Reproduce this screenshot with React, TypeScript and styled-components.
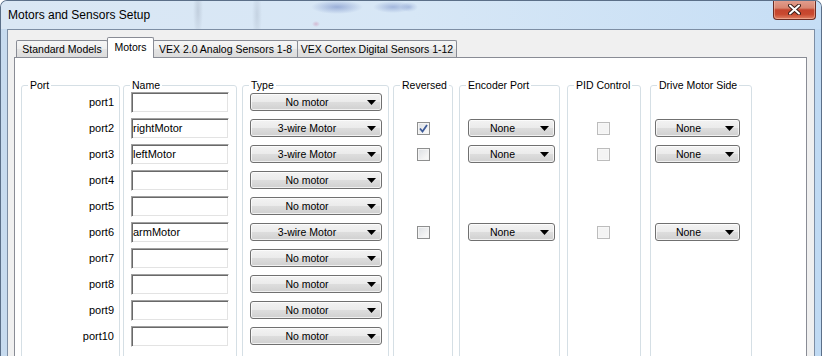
import React from 'react';
import styled, { createGlobalStyle } from 'styled-components';

const GlobalStyle = createGlobalStyle`
  html, body {
    margin: 0;
    padding: 0;
    background: #ffffff;
    overflow: hidden;
  }
  body {
    font-family: "Liberation Sans", Arial, sans-serif;
    font-size: 11px;
    color: #000;
  }
`;

type Port = {
    name: string;
    type: string;
    checked?: boolean;
};

const ports: Port[] = [
    { name: '', type: 'No motor' },
    { name: 'rightMotor', type: '3-wire Motor', checked: true },
    { name: 'leftMotor', type: '3-wire Motor', checked: false },
    { name: '', type: 'No motor' },
    { name: '', type: 'No motor' },
    { name: 'armMotor', type: '3-wire Motor', checked: false },
    { name: '', type: 'No motor' },
    { name: '', type: 'No motor' },
    { name: '', type: 'No motor' },
    { name: '', type: 'No motor' },
];

const hasMotor = (p: Port) => p.type !== 'No motor';

const Arrow = () => (
    <svg width="9" height="5" viewBox="0 0 9 5">
        <polygon points="0,0 9,0 4.5,5" fill="#000" />
    </svg>
);

const Check = () => (
    <svg width="9" height="9" viewBox="0 0 9 9">
        <path d="M1 4.5 L3.5 7.5 L8 1" fill="none" stroke="#3d5a98" strokeWidth="1.8" />
    </svg>
);

const CloseX = () => (
    <svg width="13" height="11" viewBox="0 0 13 11">
        <path d="M2 1.5 L11 9.5 M11 1.5 L2 9.5" stroke="#3b1f1a" strokeWidth="4" strokeLinecap="round" />
        <path d="M2 1.5 L11 9.5 M11 1.5 L2 9.5" stroke="#ffffff" strokeWidth="2" strokeLinecap="round" />
    </svg>
);

const MotorsSetup = () => {
    return (
        <Window>
            <TitleBar>
                <Title>Motors and Sensors Setup</Title>
                <CloseButton>
                    <CloseX />
                </CloseButton>
            </TitleBar>

            <Frame>
                <Client>
                    <TabStrip>
                        <Tab $w={92}>Standard Models</Tab>
                        <Tab $w={47} $active>Motors</Tab>
                        <Tab $w={145}>VEX 2.0 Analog Sensors 1-8</Tab>
                        <Tab $w={160}>VEX Cortex Digital Sensors 1-12</Tab>
                    </TabStrip>

                    <Panel>
                        {/* Port */}
                        <Group $w={99} $ml={0}>
                            <Legend>Port</Legend>
                            <Rows $pl={0} $pr={5}>
                                {ports.map((_, i) => (
                                    <Row key={i} $justify="flex-end">port{i + 1}</Row>
                                ))}
                            </Rows>
                        </Group>

                        {/* Name */}
                        <Group $w={114} $ml={3}>
                            <Legend>Name</Legend>
                            <Rows $pl={7} $pr={0}>
                                {ports.map((p, i) => (
                                    <Row key={i}>
                                        <NameBox readOnly value={p.name} />
                                    </Row>
                                ))}
                            </Rows>
                        </Group>

                        {/* Type */}
                        <Group $w={147} $ml={5}>
                            <Legend>Type</Legend>
                            <Rows $pl={7} $pr={0}>
                                {ports.map((p, i) => (
                                    <Row key={i}>
                                        <Dropdown $w={132}>
                                            <DropLabel>{p.type}</DropLabel>
                                            <Arrow />
                                        </Dropdown>
                                    </Row>
                                ))}
                            </Rows>
                        </Group>

                        {/* Reversed */}
                        <Group $w={60} $ml={4}>
                            <Legend>Reversed</Legend>
                            <Rows $pl={0} $pr={0}>
                                {ports.map((p, i) => (
                                    <Row key={i} $justify="center">
                                        {hasMotor(p) && (
                                            <CheckBox>{p.checked && <Check />}</CheckBox>
                                        )}
                                    </Row>
                                ))}
                            </Rows>
                        </Group>

                        {/* Encoder Port */}
                        <Group $w={101} $ml={6}>
                            <Legend>Encoder Port</Legend>
                            <Rows $pl={8} $pr={0}>
                                {ports.map((p, i) => (
                                    <Row key={i}>
                                        {hasMotor(p) && (
                                            <Dropdown $w={87}>
                                                <DropLabel>None</DropLabel>
                                                <Arrow />
                                            </Dropdown>
                                        )}
                                    </Row>
                                ))}
                            </Rows>
                        </Group>

                        {/* PID Control */}
                        <Group $w={74} $ml={7}>
                            <Legend>PID Control</Legend>
                            <Rows $pl={0} $pr={2}>
                                {ports.map((p, i) => (
                                    <Row key={i} $justify="center">
                                        {hasMotor(p) && <CheckBox $disabled />}
                                    </Row>
                                ))}
                            </Rows>
                        </Group>

                        {/* Drive Motor Side */}
                        <Group $w={102} $ml={9}>
                            <Legend>Drive Motor Side</Legend>
                            <Rows $pl={4} $pr={0}>
                                {ports.map((p, i) => (
                                    <Row key={i}>
                                        {hasMotor(p) && (
                                            <Dropdown $w={85}>
                                                <DropLabel>None</DropLabel>
                                                <Arrow />
                                            </Dropdown>
                                        )}
                                    </Row>
                                ))}
                            </Rows>
                        </Group>
                    </Panel>
                </Client>
            </Frame>
        </Window>
    );
};

const Window = styled.div`
    width: 822px;
    height: 356px;
    box-sizing: border-box;
    display: flex;
    flex-direction: column;
    overflow: hidden;
    border: 1px solid #5b6f88;
    border-bottom: none;
    border-radius: 7px 7px 0 0;
    background: linear-gradient(to right, #c7dbef 0%, #cfe2f4 45%, #c0daf3 100%);
`;

const TitleBar = styled.div`
    height: 28px;
    flex: none;
    display: flex;
    align-items: flex-start;
    padding-left: 7px;
    background:
        radial-gradient(ellipse 26px 7px at 336px 6px, rgba(40, 70, 160, 0.35), transparent),
        radial-gradient(ellipse 20px 6px at 392px 6px, rgba(40, 70, 160, 0.3), transparent),
        radial-gradient(ellipse 9px 5px at 408px 6px, rgba(40, 70, 160, 0.22), transparent),
        radial-gradient(ellipse 5px 28px at 197px 10px, rgba(110, 120, 140, 0.22), transparent),
        radial-gradient(ellipse 5px 28px at 256px 14px, rgba(110, 120, 140, 0.18), transparent),
        radial-gradient(ellipse 4px 3px at 315px 23px, rgba(200, 80, 130, 0.3), transparent),
        linear-gradient(to right, #dae7f4 0%, #d7e7f6 50%, #c6def5 100%);
`;

const Title = styled.div`
    flex: 1;
    height: 28px;
    line-height: 28px;
    font-size: 12px;
    color: #000;
`;

const CloseButton = styled.div`
    width: 43px;
    height: 20px;
    margin: -1px 5px 0 0;
    box-sizing: border-box;
    display: flex;
    align-items: center;
    justify-content: center;
    border: 1px solid #6b2c24;
    border-top: none;
    border-radius: 0 0 4px 4px;
    background: linear-gradient(#e3a090 0%, #d88671 42%, #c5452e 52%, #c9492f 75%, #df8064 100%);
    box-shadow: inset 0 0 0 1px rgba(255, 210, 190, 0.45);
`;

const Frame = styled.div`
    flex: 1;
    min-height: 0;
    display: flex;
    padding: 0 6px;
`;

const Client = styled.div`
    flex: 1;
    min-height: 0;
    display: flex;
    flex-direction: column;
    background: #f0f0f0;
    border: 1px solid #7d8ea4;
    border-bottom: none;
    padding: 7px 7px 0 6px;
`;

const TabStrip = styled.div`
    display: flex;
    align-items: flex-end;
    height: 20px;
    padding-left: 2px;
    position: relative;
    z-index: 1;
`;

const Tab = styled.div<{ $w: number; $active?: boolean }>`
    width: ${p => p.$w}px;
    box-sizing: border-box;
    flex: none;
    display: flex;
    align-items: center;
    justify-content: center;
    white-space: nowrap;
    font-size: 10.5px;
    border: 1px solid #898c95;
    border-bottom: none;
    border-radius: 2px 2px 0 0;
    & + & {
        margin-left: -1px;
    }
    ${p => p.$active ? `
        height: 21px;
        margin-bottom: -1px;
        padding-bottom: 3px;
        background: #ffffff;
        position: relative;
        z-index: 2;
    ` : `
        height: 17px;
        background: linear-gradient(#f6f6f6 0%, #eeeeee 50%, #e4e4e4 51%, #dcdcdc 100%);
    `}
`;

const Panel = styled.div`
    flex: 1;
    min-height: 0;
    display: flex;
    align-items: flex-start;
    background: #ffffff;
    border: 1px solid #898c95;
    border-bottom: none;
    padding: 21px 0 0 6px;
`;

const Group = styled.fieldset<{ $w: number; $ml: number }>`
    width: ${p => p.$w}px;
    min-width: 0;
    flex: none;
    box-sizing: border-box;
    margin: 0 0 0 ${p => p.$ml}px;
    padding: 0;
    border: 1px solid #d5dfe5;
    border-radius: 3px;
`;

const Legend = styled.legend`
    margin-left: 6px;
    padding: 0 2px;
    line-height: 12px;
    font-size: 10.5px;
    white-space: nowrap;
`;

const Rows = styled.div<{ $pl: number; $pr: number }>`
    display: flex;
    flex-direction: column;
    margin-top: -2px;
    padding: 0 ${p => p.$pr}px 14px ${p => p.$pl}px;
`;

const Row = styled.div<{ $justify?: string }>`
    height: 26px;
    display: flex;
    align-items: center;
    justify-content: ${p => p.$justify || 'flex-start'};
    white-space: nowrap;
`;

const NameBox = styled.input`
    width: 98px;
    height: 21px;
    box-sizing: border-box;
    margin: 0;
    padding: 0 1px;
    font-family: "Liberation Sans", Arial, sans-serif;
    font-size: 11px;
    color: #000;
    background: #fff;
    border: 1px solid;
    border-color: #a0a0a0 #ffffff #ffffff #a0a0a0;
    box-shadow: inset 1px 1px 0 #696969, inset -1px -1px 0 #e3e3e3;
    outline: none;
`;

const Dropdown = styled.div<{ $w: number }>`
    width: ${p => p.$w}px;
    height: 18px;
    box-sizing: border-box;
    display: flex;
    align-items: center;
    padding-right: 5px;
    font-size: 10.5px;
    border: 1px solid #707070;
    border-radius: 3px;
    background: linear-gradient(#f3f3f3 0%, #ebebeb 48%, #dddddd 52%, #d0d0d0 100%);
    box-shadow: inset 0 0 0 1px rgba(255, 255, 255, 0.7);
`;

const DropLabel = styled.span`
    flex: 1;
    text-align: center;
    margin-right: 4px;
`;

const CheckBox = styled.div<{ $disabled?: boolean }>`
    width: 13px;
    height: 13px;
    box-sizing: border-box;
    display: flex;
    align-items: center;
    justify-content: center;
    border: 1px solid ${p => p.$disabled ? '#bcbcbc' : '#8e8f8f'};
    background: ${p => p.$disabled
        ? '#f4f4f4'
        : 'linear-gradient(135deg, #dcdfe3 0%, #f4f4f4 70%, #fbfbfb 100%)'};
    box-shadow: inset 0 0 0 1px ${p => p.$disabled ? '#f7f7f7' : '#f4f4f4'};
`;

const App = () => (
    <>
        <GlobalStyle />
        <MotorsSetup />
    </>
);

export default App;
